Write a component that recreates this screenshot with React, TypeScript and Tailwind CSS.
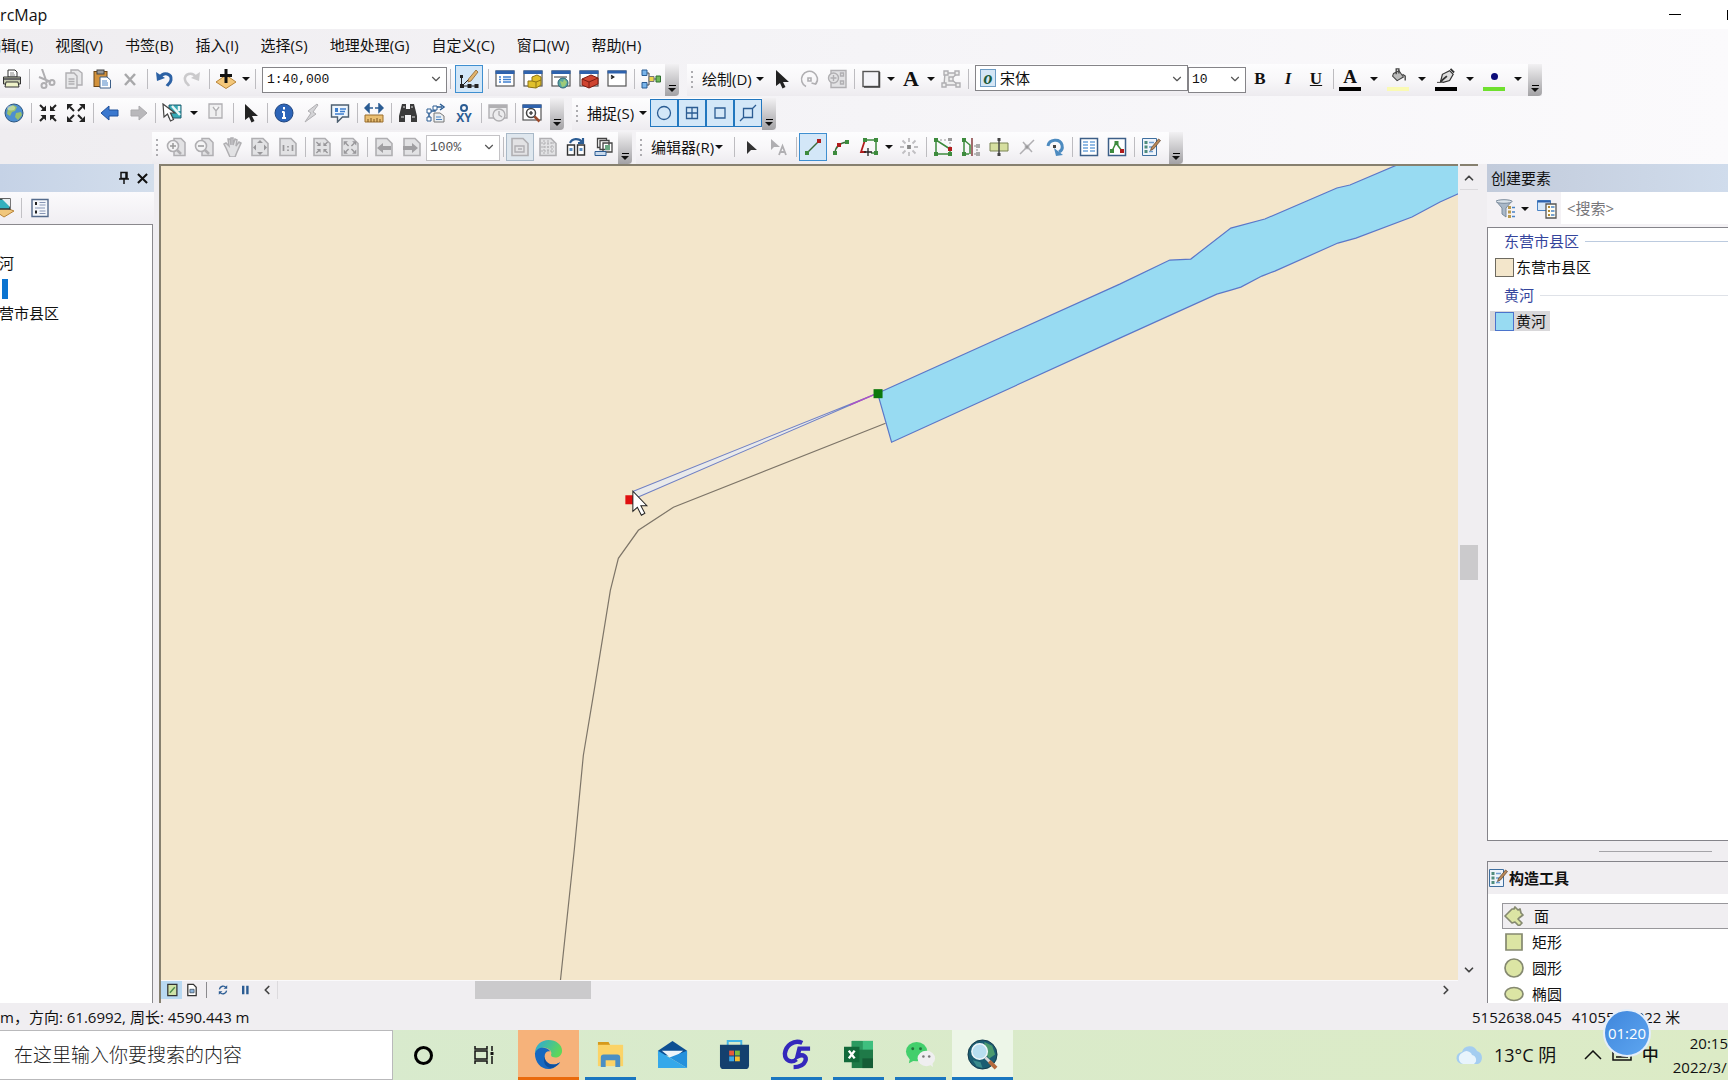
import { useState } from "react";
import type { ReactNode } from "react";
import { ChevronDown, ChevronLeft, ChevronRight, ChevronUp } from "lucide-react";
import clsx from "clsx";

// ---------------------------------------------------------------------------
// Icons (all on a 20x20 grid)
// ---------------------------------------------------------------------------

const G = "#b0afb2"; // disabled
const D = "#333";
const N = "#2b5c93"; // navy
const GR = "#3d8b3d";
const RD = "#b01c1c";

const page = <path d="M2 1.500h11l5 5v12H2z" fill="#e2e2e4" stroke={G} strokeWidth="1.600" />;

const win = (
  <>
    <rect x="1" y="2" width="18" height="15" fill="#fff" stroke="#555" strokeWidth="1.200" />
    <rect x="0.500" y="1.500" width="19" height="3.500" fill="#2e62ad" />
  </>
);

const pointer = <path d="M5 1v16l4-3 2.500 5.500 3-1.500-2.500-5H18z" fill="#222" />;

const sheetPen = (
  <>
    <path d="M1.500 1.500h14v17h-14z" fill="#eef4fb" stroke="#3f6f9f" />
    <path d="M3.500 4h3v3h-3zM3.500 8.500h3v3h-3zM3.500 13h3v3h-3z" fill="#4f8c7c" />
    <path d="M8 5.500h5M8 10h3M8 14.500h4" stroke="#6f9fd0" strokeWidth="1.500" />
    <path d="M17.500 2l2 1.500-7 8.500-3 1.500 1-3z" fill="#b98a5a" stroke="#5c4028" strokeWidth=".7" />
  </>
);

const arrowsIn = (c: string) => (
  <>
    <path d="M2 2l4 4M18 2l-4 4M2 18l4-4M18 18l-4-4" stroke={c} strokeWidth="2" />
    <path d="M8 2.500V8H2.500zM12 2.500V8h5.500zM8 17.500V12H2.500zM12 17.500V12h5.500z" fill={c} />
  </>
);

const arrowsOut = (c: string) => (
  <>
    <path d="M4 4l4 4M16 4l-4 4M4 16l4-4M16 16l-4-4" stroke={c} strokeWidth="2" />
    <path d="M1 1h6L1 7zM19 1h-6l6 6zM1 19h6l-6-6zM19 19h-6l6-6z" fill={c} />
  </>
);

const ICONS: Record<string, ReactNode> = {
  print: (
    <>
      <path d="M6 8V1h7l2 2v5z" fill="#fff" stroke={D} />
      <path d="M8 4h4M8 6h5" stroke="#888" />
      <path d="M1.500 8h17v7h-17z" fill="#c7ccb0" stroke={D} />
      <path d="M2 9h16v2H2z" fill="#666" />
      <path d="M4 13h12l1 5H3z" fill="#eef2c8" stroke={D} />
    </>
  ),
  cut: (
    <g stroke={G} strokeWidth="2" fill="none">
      <path d="M6 0l5 14M3 8l12 5" />
      <circle cx="8" cy="16.500" r="2.500" />
      <circle cx="16" cy="13.500" r="2.500" />
    </g>
  ),
  copy: (
    <g fill="#e8e8ea" stroke={G} strokeWidth="1.400">
      <path d="M7 1h7l4 3v12H7z" />
      <path d="M2 4h8l3 3v12H2z" />
      <path d="M4.500 10h6M4.500 12.500h6M4.500 15h6" />
    </g>
  ),
  paste: (
    <>
      <rect x="2" y="2.500" width="13" height="15" fill="#d3923c" stroke="#6b4516" />
      <rect x="5" y="1" width="7" height="4" fill="#999" stroke="#444" />
      <path d="M8 8h7l3.500 3v8H8z" fill="#fff" stroke="#3d5f88" />
      <path d="M10 12h5M10 14h6M10 16h6" stroke="#4a83c4" />
    </>
  ),
  remove: <path d="M5 5l10 11M15 5L5 16" stroke="#a8a8aa" strokeWidth="2.500" />,
  undo: (
    <>
      <path d="M6 8c4-6 12-3 11 3-.5 3-3 4-4 6" stroke="#2d62a5" strokeWidth="3" fill="none" />
      <path d="M2 3l1 9 8-3z" fill="#2d62a5" />
    </>
  ),
  redo: (
    <>
      <path d="M14 8C10 2 2 5 3 11c.5 3 3 4 4 6" stroke="#cbcacc" strokeWidth="2.500" fill="none" />
      <path d="M18 3l-1 9-8-3z" fill="#cbcacc" />
    </>
  ),
  addData: (
    <>
      <path d="M10 6l10 7-10 6.500L0 13z" fill="#f3c77a" stroke="#b9853a" />
      <path d="M10 0v14M4 6.500h12" stroke="#111" strokeWidth="3" />
    </>
  ),
  editorTool: (
    <>
      <path d="M2.500 7v10M2.500 17h15M4 16l6-6" stroke="#222" fill="none" />
      <path d="M1 6h3v3H1zM1 15h4v4H1zM8.500 15h4v4h-4zM15.500 15h4v4h-4z" fill="#222" />
      <path d="M17 1l2 2-7 9-3 1 .5-3z" fill="#e2b46d" stroke="#8a6230" strokeWidth=".8" />
    </>
  ),
  toc: (
    <>
      {win}
      <path d="M4 8h2M4 10.500h2M4 13h2M8 8h8M8 10.500h8M8 13h8" stroke="#3f7fce" strokeWidth="1.300" />
    </>
  ),
  catalog: (
    <>
      {win}
      <path d="M5 12h4V8l5-2 4 2v8l-5 3-8-1z" fill="#e0c02c" stroke="#8e7412" />
      <path d="M9 12l4 1 5-2M13 13v6" stroke="#8e7412" fill="none" />
    </>
  ),
  searchWin: (
    <>
      {win}
      <path d="M3 8h13" stroke="#999" strokeWidth="2" />
      <circle cx="12" cy="14" r="5" fill="#58a7a0" stroke="#2b6276" />
      <path d="M9 12l3 1 1-3 3 3-2 4-3 1z" fill="#9ecb7a" />
    </>
  ),
  toolbox: (
    <>
      {win}
      <path d="M3 10l9-4 7 3v6l-9 4-7-3z" fill="#cf4430" stroke="#7c1c12" />
      <path d="M3 10l7 3v6M10 13l9-4" stroke="#7c1c12" fill="none" />
    </>
  ),
  python: (
    <>
      <rect x="1" y="2" width="18" height="15" fill="#fff" stroke="#555" strokeWidth="1.200" />
      <rect x="0.500" y="1.500" width="19" height="3" fill="#2e62ad" />
      <path d="M4 6.500l2.500 1.500L4 9.500" stroke="#222" strokeWidth="1.500" fill="none" />
    </>
  ),
  model: (
    <>
      <path d="M6 4h2v12H5M8 10h8" stroke="#444" fill="none" />
      <path d="M1 1h5v5.500H1zM1 13.500h5V19H1z" fill="#79b4ea" stroke="#2b5c93" />
      <path d="M8 7.500h5v5H8z" fill="#ecd34a" stroke="#777" />
      <path d="M15 7h4.500v6H15z" fill="#71ba5a" stroke="#2f6f2f" />
    </>
  ),
  pointer,
  rotate: (
    <g stroke={G} strokeWidth="1.600" fill="none">
      <path d="M7 17.500A8 8 0 1 1 17 15M18.500 11l-2 4-4-1" />
      <path d="M9 9h3v3H9z" />
    </g>
  ),
  zoomSel: (
    <g stroke={G} strokeWidth="1.400" fill="#e2e2e4">
      <path d="M4 1.500h15v17H4z" />
      <circle cx="6.500" cy="9" r="5" />
      <path d="M6.500 6v6M3.500 9h6M13.500 4h3v3h-3zM13.500 12h3v3h-3z" />
    </g>
  ),
  rect: (
    <>
      <rect x="2" y="2.500" width="16" height="15" fill="#f4f4f8" stroke="#555" strokeWidth="1.400" />
      <path d="M18.500 3v15H3" stroke="#444" strokeWidth="1.500" fill="none" />
    </>
  ),
  vertices: (
    <g stroke={G} strokeWidth="1.400" fill="#eee">
      <path d="M4 4h13l-7 6 7 6H3z" />
      <path d="M3 2h4v4H3zM14 2h4v4h-4zM8 8h4v4H8zM1 14h4v4H1zM15 14h4v4h-4z" />
    </g>
  ),
  bucket: (
    <>
      <path d="M5 6l6-3 5 7-7 4-5-5z" fill="#bbb" stroke="#444" strokeWidth="1.200" />
      <path d="M8 7V1h3v5M15 7l3 2v5" stroke="#444" strokeWidth="1.500" fill="none" />
    </>
  ),
  pen: (
    <>
      <path d="M4 15l2-8 8-4 4 4-4 7-7 2z" fill="#ddd" stroke="#333" strokeWidth="1.300" />
      <path d="M15 1l4 4M4 15l7-6" stroke="#333" strokeWidth="2" />
      <path d="M0 16h5" stroke="#333" />
    </>
  ),
  globe: (
    <>
      <circle cx="10" cy="10" r="9" fill="#4d8fd0" stroke="#2b567f" />
      <path d="M4 5l5-3 4 2-2 4-3 1-2 4-3-2zM12 10l5-1 1 3-4 5-3-3z" fill="#9ac16b" />
      <ellipse cx="7" cy="5" rx="4" ry="2.500" fill="#fff" opacity=".35" />
    </>
  ),
  fixedIn: arrowsIn("#222"),
  fixedOut: arrowsOut("#222"),
  back: <path d="M1 10l8-7v4h9v6H9v4z" fill="#3a78cf" stroke="#1f509b" />,
  forward: <path d="M19 10l-8-7v4H3v6h8v4z" fill="#b9b8bb" stroke="#acabae" />,
  selectFeat: (
    <>
      <path d="M7 2h12v13H7z" fill="#35a9b5" stroke="#225f70" />
      <path d="M10 3l8 9M17 3v5" stroke="#e9f5f5" strokeWidth="2.500" />
      <path d="M1 1l1 13 3.500-3 3 7 3-1.500-3-6.500H13z" fill="#fff" stroke="#444" strokeWidth="1.200" />
    </>
  ),
  clearSel: (
    <g stroke={G} strokeWidth="1.300" fill="#efeff0">
      <path d="M3 1h13v14H3zM7 4l3 4 3-4M10 8v5" />
    </g>
  ),
  info: (
    <>
      <circle cx="10" cy="10" r="9" fill="#2c64b8" stroke="#1f4580" />
      <path d="M10 4v2.500M10 8.500V15M8 9h2M8 15h4" stroke="#fff" strokeWidth="2" />
    </>
  ),
  lightning: <path d="M15 1L6 8l3 2-6 9 11-8-3-2 5-7z" fill="#d4d4d7" stroke={G} />,
  popup: (
    <>
      <path d="M1.500 2h17v12h-6l-5 5v-5h-6z" fill="#eef5fc" stroke="#4d5f70" strokeWidth="1.400" />
      <path d="M5 5h3v4H5z" fill="#3f7fce" />
      <path d="M10 6h6M10 8.500h5M5 11h9" stroke="#3f7fce" strokeWidth="1.300" />
    </>
  ),
  measure: (
    <>
      <path d="M1 5l4-4v8zM19 5l-4-4v8zM4 5h5M11 5h5" fill={N} stroke={N} strokeWidth="1.500" />
      <path d="M1 12h18v7H1z" fill="#eabf72" stroke="#9b6f2c" />
      <path d="M4 19v-3M7 19v-4M10 19v-3M13 19v-4M16 19v-3" stroke="#7a5420" />
    </>
  ),
  find: (
    <>
      <path d="M4 1h4v5h4V1h4l3 12v6h-6v-7H7v7H1v-6z" fill="#3a3a3a" />
      <path d="M3 14h3M14 14h3M5 4h2M13 4h2" stroke="#aaa" strokeWidth="1.300" />
    </>
  ),
  route: (
    <>
      <path d="M3 15V8h6V4h7M14 1l4 3-4 3" stroke={N} strokeWidth="1.500" fill="none" />
      <path d="M1 14h4v4H1zM1 6h4v4H1zM7 3h4v4H7z" fill="#fff" stroke={N} />
      <path d="M8 10h6l4 3v6H8z" fill="#e9eef2" stroke="#777" />
      <path d="M10 14h5M10 16.500h6" stroke="#4a83c4" />
    </>
  ),
  time: (
    <g stroke={G} strokeWidth="1.400" fill="#ececee">
      <path d="M1 2h18v13H1z" />
      <path d="M1 3.500h18" strokeWidth="3" />
      <circle cx="11" cy="12" r="6" />
      <path d="M11 8v4l3 2" fill="none" />
    </g>
  ),
  viewer: (
    <>
      {win}
      <circle cx="9" cy="10" r="4.500" fill="#fff" stroke="#444" strokeWidth="1.500" />
      <path d="M9 8v4M7 10h4" stroke="#222" strokeWidth="1.200" />
      <path d="M12.500 13.500l5 5" stroke="#9a4a2c" strokeWidth="2.500" />
    </>
  ),
  snapPoint: <circle cx="10" cy="10" r="6.500" fill="none" stroke={N} strokeWidth="1.300" />,
  snapEnd: <path d="M4.500 4.500h11v11h-11zM10 4.500v11M4.500 10h11" fill="none" stroke={N} strokeWidth="1.300" />,
  snapVertex: <path d="M5 5h10v10H5z" fill="none" stroke={N} strokeWidth="1.300" />,
  snapEdge: <path d="M5.500 5.500h9v9h-9zM2 18l3.500-3.500M14.500 5.500L18 2" fill="none" stroke={N} strokeWidth="1.300" />,
  lZoomIn: (
    <>
      <path d="M8 1.500h7l4 4v13H8z" fill="#e2e2e4" stroke={G} strokeWidth="1.500" />
      <circle cx="7" cy="9" r="5.500" fill="#f4f4f5" stroke={G} strokeWidth="1.600" />
      <path d="M7 6v6M4 9h6" stroke="#999" strokeWidth="1.500" />
      <path d="M11 13l4 4" stroke={G} strokeWidth="2.500" />
    </>
  ),
  lZoomOut: (
    <>
      <path d="M8 1.500h7l4 4v13H8z" fill="#e2e2e4" stroke={G} strokeWidth="1.500" />
      <circle cx="7" cy="9" r="5.500" fill="#f4f4f5" stroke={G} strokeWidth="1.600" />
      <path d="M4 9h6" stroke="#999" strokeWidth="1.500" />
      <path d="M11 13l4 4" stroke={G} strokeWidth="2.500" />
    </>
  ),
  lPan: (
    <path
      d="M4 11L2 7l2-1 3 3-1-7h2l1 6V1h2v7l2-6 2 1-1 6 3-4 2 1-4 9-2 5H8z"
      fill="#e2e2e4"
      stroke={G}
      strokeWidth="1.500"
    />
  ),
  lWhole: (
    <>
      {page}
      <path d="M10 3l3 3H7zM10 18l3-3H7zM3 10.500l3-3v6zM17 10.500l-3-3v6z" fill="#98979a" />
    </>
  ),
  lActual: (
    <>
      {page}
      <path d="M5.500 8v6M14.500 8v6M10 9v1.500M10 12.500V14" stroke="#98979a" strokeWidth="1.700" />
    </>
  ),
  lIn: (
    <>
      {page}
      <g transform="translate(3 3.500) scale(.7)">{arrowsIn("#98979a")}</g>
    </>
  ),
  lOut: (
    <>
      {page}
      <g transform="translate(3 3.500) scale(.7)">{arrowsOut("#98979a")}</g>
    </>
  ),
  lBack: (
    <>
      {page}
      <path d="M3 11l6-5v3h8v4H9v3z" fill="#a09fa2" />
    </>
  ),
  lForward: (
    <>
      {page}
      <path d="M16 11l-6-5v3H1v4h9v3z" fill="#a09fa2" />
    </>
  ),
  draft: (
    <>
      {page}
      <path d="M5 9h9v6H5zM8 12h4" fill="none" stroke={G} strokeWidth="1.400" />
    </>
  ),
  focusFrame: (
    <>
      {page}
      <path d="M3 6h13M3 10h13M3 14h13M6 3v14M10 3v14M14 5v12" stroke={G} strokeDasharray="2 1" />
    </>
  ),
  changeLayout: (
    <>
      <path d="M1.500 8h7v10h-7zM11.500 8h7v10h-7z" fill="#fff" stroke="#333" strokeWidth="1.400" />
      <path d="M3.500 11h3v3h-3zM13.500 11h3v3h-3z" fill="#5b8fc4" />
      <path d="M4 6c2-5 9-5 12-1M17 1v5h-5" stroke={N} strokeWidth="2.200" fill="none" />
    </>
  ),
  pages: (
    <>
      <path d="M3.500 1.500h9v9h-9z" fill="#fff" stroke="#444" strokeWidth="1.300" />
      <path d="M6 3.500h9v9H6zM9 6h9v9H9z" fill="#fff" stroke="#444" strokeWidth="1.300" />
      <path d="M11 8h5v5h-5z" fill="#6aa882" />
      <path d="M1 14.500h11v4H1z" fill="#c8d9ec" stroke={N} />
    </>
  ),
  editTool: <path d="M6 4v13l4-4h6z" fill="#333" />,
  editAnno: (
    <>
      <path d="M2 2v11l3-3h6z" fill={G} />
      <path d="M10 18l3.500-9 3.500 9M11 15h5" stroke={G} strokeWidth="1.800" fill="none" />
    </>
  ),
  segLine: (
    <>
      <path d="M4 16L16 4" stroke="#3a6b3a" strokeWidth="1.500" />
      <path d="M2 14h4v4H2z" fill={GR} />
      <path d="M14 2h4v4h-4z" fill={RD} />
    </>
  ),
  segArc: (
    <>
      <path d="M4 17c0-7 4-11 12-12" stroke="#3a6b3a" strokeWidth="1.500" fill="none" />
      <path d="M2 14h4v4H2zM14 3h4v4h-4z" fill={GR} />
      <path d="M6 6h4v4H6z" fill={RD} />
    </>
  ),
  trace: (
    <>
      <path d="M6 3h11v13h-5" stroke={GR} strokeWidth="1.500" fill="none" />
      <path d="M6 3L2 15h5" stroke={RD} strokeWidth="1.800" fill="none" />
      <path d="M4 1h4v4H4zM15 1h4v4h-4zM15 14h4v4h-4z" fill={GR} />
      <path d="M9 11v8M5 15h8" stroke="#222" strokeWidth="1.300" />
    </>
  ),
  pointTool: (
    <g stroke="#c0bfc2" strokeWidth="1.800" fill="none">
      <path d="M10 1v4M10 15v4M1 10h4M15 10h4M3.500 3.500l3 3M16.500 3.500l-3 3M3.500 16.500l3-3M16.500 16.500l-3-3" />
      <path d="M9 9h2v2H9z" stroke="#888" />
    </g>
  ),
  editVerts: (
    <>
      <path d="M3 3v14h14V12L3 3" stroke={GR} strokeWidth="1.500" fill="none" />
      <path d="M3 3h14v10" stroke="#999" strokeDasharray="2 2" fill="none" />
      <path d="M1 1h4v4H1zM1 15h4v4H1zM15 15h4v4h-4z" fill={GR} />
      <path d="M15 10h4v4h-4z" fill={RD} />
      <path d="M15 1h4v3h-4z" fill="#999" />
    </>
  ),
  reshape: (
    <>
      <path d="M3 3v14h5M3 3l6 5v9" stroke={GR} strokeWidth="1.500" fill="none" />
      <path d="M11 1v18" stroke="#7b3030" strokeWidth="1.400" />
      <path d="M13 9h3v8h-3" stroke="#888" strokeDasharray="2 1" fill="none" />
      <path d="M15 7h4v4h-4zM15 15h4v4h-4z" fill="#aaa" />
      <path d="M1 1h4v4H1zM1 15h4v4H1z" fill={GR} />
    </>
  ),
  cutPoly: (
    <>
      <path d="M1 6h18v8H1z" fill="#d6dfa0" stroke="#7b8454" />
      <path d="M10 1v18" stroke="#444" strokeWidth="1.500" />
      <path d="M8.500 1h3v3h-3zM8.500 16h3v3h-3z" fill="#444" />
    </>
  ),
  split: (
    <g stroke={G} strokeWidth="1.500">
      <path d="M3 17L17 3M6 5l9 10" />
      <path d="M8.500 8.500h3v3h-3z" fill="#888" />
    </g>
  ),
  rotateFeat: (
    <>
      <path d="M3 9c1-7 12-8 14-1 1 4-1 6-3 7" stroke="#4d8bc0" strokeWidth="3" fill="none" />
      <path d="M9 11l2 8 7-1z" fill="#4d8bc0" />
      <path d="M8 8h3v3H8z" fill="#444" />
    </>
  ),
  attrs: (
    <>
      <path d="M1.500 1.500h17v17h-17z" fill="#fff" stroke="#3d5f88" strokeWidth="1.500" />
      <path d="M4 5h5M4 8h5M4 11h5M4 14h5M11 5h5M11 8h5M11 11h5M11 14h5" stroke="#6fa5dc" strokeWidth="1.500" />
    </>
  ),
  sketchProps: (
    <>
      <path d="M1.500 1.500h17v17h-17z" fill="#fff" stroke="#3d5f88" strokeWidth="1.500" />
      <path d="M5 14l4-8 6 8" stroke={GR} strokeWidth="1.500" fill="none" />
      <path d="M3 12h4v4H3zM7.500 4h4v4h-4z" fill={GR} />
      <path d="M13 12h4v4h-4z" fill={RD} />
    </>
  ),
  sheetPen,
  layerBy: (
    <>
      <path d="M9 9l10 4-10 6-9-6z" fill="#f1c77c" stroke="#b9853a" />
      <path d="M1 1h14v10H1z" fill="#33b0bd" stroke="#333" strokeWidth="1.300" />
      <path d="M7 1h8v8z" fill="#e7eef0" />
    </>
  ),
  options: (
    <>
      <path d="M2 1.500h16v17H2z" fill="#f4f7fb" stroke="#556b8c" strokeWidth="1.400" />
      <path d="M5 5.500h2M5 14h2" stroke="#222" strokeWidth="3" />
      <path d="M9.500 4.500h6M9.500 7h6M9.500 13h6M9.500 15.500h6M5 10h10" stroke="#8796b5" />
    </>
  ),
  filter: (
    <>
      <path d="M0 2h16l-6 7v9l-4-3V9z" fill="#a9b8c8" stroke="#7b8b9c" />
      <ellipse cx="8" cy="2.500" rx="8" ry="1.800" fill="#dbe3ea" stroke="#7b8b9c" />
      <path d="M12 7h3v3h-3zM12 11.500h3v3h-3zM12 16h3v3h-3z" fill="#b99a4d" />
      <path d="M16 8.500h3M16 13h3M16 17.500h3" stroke="#4a83c4" strokeWidth="1.400" />
    </>
  ),
  templates: (
    <>
      <path d="M.5 1.500h13v10H.5z" fill="#d8e8f8" stroke="#4a83c4" />
      <path d="M.5 1.500h13v2H.5z" fill="#2e62ad" />
      <path d="M9 5h10v14H9z" fill="#fffdf2" stroke="#555" strokeWidth="1.300" />
      <path d="M11 8h2M11 12h2M11 16h2" stroke="#b48a32" strokeWidth="2" />
      <path d="M14 8h3.500M14 12h3.500M14 16h3.500" stroke="#4a83c4" strokeWidth="1.300" />
    </>
  ),
  polygon: (
    <path
      d="M1 10l7-7h2l1-2 3 3 2-1 1 4 2 2-4 3-1 1 4 4-3 3-4-4-3 1z"
      fill="#dce5a4"
      stroke="#858970"
      strokeWidth="1.700"
      strokeLinejoin="round"
    />
  ),
  rectangle: <path d="M2 2h16v16H2z" fill="#dce5a4" stroke="#858970" strokeWidth="1.700" />,
  circle: <circle cx="10" cy="10" r="9" fill="#dce5a4" stroke="#858970" strokeWidth="1.700" />,
  ellipse: <ellipse cx="10" cy="10" rx="9" ry="6.500" fill="#dce5a4" stroke="#858970" strokeWidth="1.700" />,
  dataView: (
    <>
      <path d="M4 2h13v16H4z" fill="#cfe3a8" stroke="#333" strokeWidth="1.800" />
      <path d="M7 14l7-8" stroke="#4b8b4b" strokeWidth="2" />
    </>
  ),
  layoutView: (
    <>
      <path d="M4 2h8l4 4v12H4z" fill="#fff" stroke="#333" strokeWidth="1.800" />
      <path d="M7 9h6v5H7z" fill="#8db4dc" stroke="#345" />
    </>
  ),
  refresh: (
    <>
      <path d="M4 9c1-6 8-7 11-3M16 11c-1 6-8 7-11 3" stroke={N} strokeWidth="2.200" fill="none" />
      <path d="M17 2v6h-6zM3 18v-6h6z" fill={N} />
    </>
  ),
  pause: <path d="M5 3h4v14H5zM12 3h4v14h-4z" fill={N} />,
};

function Icon({ name, className = "h-5 w-5" }: { name: string; className?: string }) {
  return (
    <svg viewBox="0 0 20 20" className={clsx("shrink-0", className)} fill="none" aria-hidden="true">
      {ICONS[name]}
    </svg>
  );
}

// ---------------------------------------------------------------------------
// Toolbar parts
// ---------------------------------------------------------------------------

function Caret() {
  return (
    <svg viewBox="0 0 8 4" className="h-1 w-2 shrink-0" aria-hidden="true">
      <path d="M0 0h8L4 4z" fill="#111" />
    </svg>
  );
}

function Tool({ icon, active, snap }: { icon: string; active?: boolean; snap?: boolean }) {
  return (
    <button
      aria-label={icon}
      className={clsx(
        "flex h-7 w-7 shrink-0 items-center justify-center",
        active && "border border-[#3f8fd0] bg-[#d3e7f8]",
        snap && "border border-[#2277bf] bg-[#d3e7f8]"
      )}
    >
      <Icon name={icon} />
    </button>
  );
}

function Tools({ names }: { names: string[] }) {
  return (
    <>
      {names.map((n) => (
        <Tool key={n} icon={n} />
      ))}
    </>
  );
}

function Drop({ className = "w-3" }: { className?: string }) {
  return (
    <button aria-label="more" className={clsx("flex h-7 shrink-0 items-center justify-center", className)}>
      <Caret />
    </button>
  );
}

function Sep() {
  return (
    <span className="flex h-7 w-[6px] shrink-0 items-center justify-center">
      <span className="h-[20px] w-px bg-[#bdbcc0]" />
    </span>
  );
}

function Grip() {
  return (
    <span className="flex h-7 w-[10px] shrink-0 flex-col items-center justify-center gap-[3px]">
      {[0, 1, 2, 3].map((i) => (
        <span key={i} className="h-[2px] w-[2px] bg-[#adacb0]" />
      ))}
    </span>
  );
}

function Overflow() {
  return (
    <button
      aria-label="toolbar options"
      className="-mt-px flex h-8 w-[14px] shrink-0 flex-col items-center justify-end gap-[2px] rounded-br-sm bg-linear-to-b from-[#f2f1f3] to-[#a3a2a5] pb-1"
    >
      <span className="h-px w-[7px] bg-black" />
      <Caret />
    </button>
  );
}

function Bar({ children, className }: { children: ReactNode; className?: string }) {
  return (
    <div
      className={clsx(
        "flex h-8 shrink-0 items-start bg-linear-to-b from-[#fdfdfe] via-[#f8f7f9] to-[#edebef] pt-px",
        className
      )}
    >
      {children}
    </div>
  );
}

function Combo({
  value,
  label,
  className,
  textClass,
  icon,
}: {
  value: string;
  label: string;
  className: string;
  textClass: string;
  icon?: ReactNode;
}) {
  return (
    <div className={clsx("relative h-[26px] shrink-0", className)}>
      <select
        aria-label={label}
        defaultValue={value}
        className={clsx("h-full w-full appearance-none border bg-white outline-none", textClass)}
      >
        <option>{value}</option>
      </select>
      {icon}
      <ChevronDown className="pointer-events-none absolute top-[7px] right-1 h-3.5 w-3.5 text-[#555]" strokeWidth={2} />
    </div>
  );
}

function MenuLabel({ text, className }: { text: string; className: string }) {
  return (
    <button className={clsx("flex h-7 shrink-0 items-center justify-between pl-[5px] text-[15px]", className)}>
      <span className="whitespace-nowrap">{text}</span>
      <Caret />
    </button>
  );
}

function ColorTool({ icon, glyph, bar }: { icon?: string; glyph?: ReactNode; bar: string }) {
  return (
    <>
      <button aria-label="color" className="flex h-7 w-7 shrink-0 flex-col items-center justify-center gap-px">
        <span className="flex h-[18px] items-center justify-center">
          {icon ? <Icon name={icon} className="h-[18px] w-[18px]" /> : glyph}
        </span>
        <span className={clsx("h-1 w-[22px]", bar)} />
      </button>
      <Drop className="w-5" />
    </>
  );
}

const MENUS = ["编辑(E)", "视图(V)", "书签(B)", "插入(I)", "选择(S)", "地理处理(G)", "自定义(C)", "窗口(W)", "帮助(H)"];

function Toolbars() {
  return (
    <div className="flex flex-col gap-[2px] overflow-hidden">
      <div className="flex">
        <Bar className="-ml-[2px]">
          <Tools names={["print"]} />
          <Sep />
          <Tools names={["cut", "copy", "paste", "remove"]} />
          <Sep />
          <Tools names={["undo", "redo"]} />
          <Sep />
          <Tools names={["addData"]} />
          <Drop />
          <Sep />
          <Combo
            label="比例"
            value="1:40,000"
            className="ml-1 w-[185px]"
            textClass="border-[#858488] pl-1 font-['Liberation_Mono',monospace] text-[13px]"
          />
          <Sep />
          <span className="px-[2px]">
            <Tool icon="editorTool" active />
          </span>
          <Sep />
          <Tools names={["toc", "catalog", "searchWin", "toolbox", "python"]} />
          <Sep />
          <Tools names={["model"]} />
          <Overflow />
        </Bar>
        <Bar className="ml-2">
          <Grip />
          <MenuLabel text="绘制(D)" className="w-[70px] pr-[3px]" />
          <Tools names={["pointer", "rotate", "zoomSel"]} />
          <Sep />
          <Tools names={["rect"]} />
          <Drop />
          <button className="h-7 w-7 text-center font-['Liberation_Serif',serif] text-[22px] leading-7 font-bold">A</button>
          <Drop />
          <Tools names={["vertices"]} />
          <Sep />
          <Combo
            label="字体"
            value="宋体"
            className="ml-1 w-[213px]"
            textClass="border-[#858488] pl-6 text-[15px]"
            icon={
              <span className="pointer-events-none absolute top-1 left-[5px] flex h-[18px] w-4 items-center justify-center border border-[#6d9cc4] bg-[#d4e6f5] font-['Liberation_Serif',serif] text-[18px] leading-4 font-bold text-[#1c5c3c] italic">
                o
              </span>
            }
          />
          <Combo
            label="字号"
            value="10"
            className="w-[58px]"
            textClass="border-[#858488] pl-[3px] font-['Liberation_Mono',monospace] text-[13px]"
          />
          <button className="h-7 w-7 font-['Liberation_Serif',serif] text-[17px] font-bold">B</button>
          <button className="h-7 w-7 font-['Liberation_Serif',serif] text-[17px] font-bold italic">I</button>
          <button className="h-7 w-7 font-['Liberation_Serif',serif] text-[17px] font-bold underline">U</button>
          <Sep />
          <ColorTool
            glyph={<span className="font-['Liberation_Serif',serif] text-[19px] leading-[18px] font-bold">A</span>}
            bar="bg-black"
          />
          <ColorTool icon="bucket" bar="bg-[#fafab4]" />
          <ColorTool icon="pen" bar="bg-black" />
          <ColorTool glyph={<span className="h-[7px] w-[7px] rounded-full bg-[#0c0c78]" />} bar="bg-[#6fe02e]" />
          <Overflow />
        </Bar>
      </div>

      <div className="flex">
        <Bar>
          <Tools names={["globe"]} />
          <Sep />
          <Tools names={["fixedIn", "fixedOut"]} />
          <Sep />
          <Tools names={["back", "forward"]} />
          <Sep />
          <Tools names={["selectFeat"]} />
          <Drop className="w-4" />
          <Tools names={["clearSel"]} />
          <Sep />
          <Tools names={["pointer"]} />
          <Sep />
          <Tools names={["info", "lightning", "popup"]} />
          <Sep />
          <Tools names={["measure"]} />
          <Sep />
          <Tools names={["find", "route"]} />
          <button className="flex h-7 w-7 shrink-0 flex-col items-center justify-center text-[12px] leading-[11px] font-bold text-[#2b5c93]">
            <span className="flex h-2 w-2 items-center justify-center rounded-full border-2 border-[#2b5c93]" />
            XY
          </button>
          <Sep />
          <Tools names={["time"]} />
          <Sep />
          <Tools names={["viewer"]} />
          <span className="w-1" />
          <Overflow />
        </Bar>
        <Bar className="ml-2">
          <Grip />
          <MenuLabel text="捕捉(S)" className="w-[68px] pr-[3px]" />
          <Tool icon="snapPoint" snap />
          <Tool icon="snapEnd" snap />
          <Tool icon="snapVertex" snap />
          <Tool icon="snapEdge" snap />
          <Overflow />
        </Bar>
      </div>

      <div className="flex pl-[152px]">
        <Bar>
          <Grip />
          <Tools names={["lZoomIn", "lZoomOut", "lPan", "lWhole", "lActual"]} />
          <Sep />
          <Tools names={["lIn", "lOut"]} />
          <Sep />
          <Tools names={["lBack", "lForward"]} />
          <Combo
            label="缩放"
            value="100%"
            className="w-[74px]"
            textClass="border-[#c4c3c6] pl-[3px] font-['Liberation_Mono',monospace] text-[13px] text-[#555]"
          />
          <Sep />
          <button
            aria-label="draft"
            className="flex h-7 w-7 shrink-0 items-center justify-center border border-[#a9b9c8] bg-[#dfe7ee]"
          >
            <Icon name="draft" />
          </button>
          <Tools names={["focusFrame", "changeLayout", "pages"]} />
          <Overflow />
        </Bar>
        <Bar className="ml-1">
          <Grip />
          <MenuLabel text="编辑器(R)" className="w-[85px] pr-2" />
          <Sep />
          <Tools names={["editTool", "editAnno"]} />
          <Sep />
          <Tool icon="segLine" active />
          <Tools names={["segArc", "trace"]} />
          <Drop />
          <Tools names={["pointTool"]} />
          <Sep />
          <Tools names={["editVerts", "reshape", "cutPoly", "split", "rotateFeat"]} />
          <Sep />
          <Tools names={["attrs", "sketchProps"]} />
          <Sep />
          <Tools names={["sheetPen"]} />
          <span className="w-1" />
          <Overflow />
        </Bar>
      </div>
    </div>
  );
}

// ---------------------------------------------------------------------------
// Panels
// ---------------------------------------------------------------------------

function ContentsPanel() {
  return (
    <aside className="mr-[5px] flex w-[154px] shrink-0 flex-col overflow-hidden">
      <div className="flex h-7 shrink-0 items-center justify-end gap-1 bg-linear-to-r from-[#c5d2e6] to-[#d3deec] pr-[3px]">
        <button aria-label="pin">
          <svg viewBox="0 0 12 14" className="h-3.5 w-3" aria-hidden="true">
            <path d="M3 1.500h6v6H3zM8 1.500v6M1 8h10M6 8v5" stroke="#111" strokeWidth="1.500" fill="none" />
          </svg>
        </button>
        <button aria-label="close">
          <svg viewBox="0 0 12 12" className="mx-[3px] h-[11px] w-[11px]" aria-hidden="true">
            <path d="M1 1l10 10M11 1L1 11" stroke="#111" strokeWidth="2.200" />
          </svg>
        </button>
      </div>
      <div className="flex h-8 shrink-0 items-center bg-linear-to-b from-[#fbfafc] to-[#f0eef2]">
        <button aria-label="layers" className="-ml-[5px]">
          <Icon name="layerBy" />
        </button>
        <span className="ml-[6px] h-5 w-px bg-[#c2c1c5]" />
        <button aria-label="options" className="ml-2">
          <Icon name="options" />
        </button>
      </div>
      <div className="mr-px flex-1 border-t border-r border-[#8a898d] bg-white pt-[26px] text-[15px] leading-[25px]">
        <div className="-ml-[1px] h-[25px]">河</div>
        <div className="flex h-[25px] items-center pl-[2px]">
          <span className="h-5 w-[6px] bg-[#0b74d1]" />
        </div>
        <div className="-ml-[1px] h-[25px]">营市县区</div>
      </div>
    </aside>
  );
}

function MapCanvas() {
  return (
    <svg
      viewBox="162 166 1296 814"
      preserveAspectRatio="xMinYMin slice"
      className="min-h-0 w-full flex-1 bg-[#f3e6cb]"
      role="img"
      aria-label="map"
    >
      <polyline
        points="886,423 674,507 639,530 619,558 611,590 595,689 584,755 575,849 561,981"
        fill="none"
        stroke="#7d7568"
        strokeWidth="1.200"
      />
      <polygon
        points="878,393 1120,284 1170,260 1191,259 1231,228 1265,219 1337,188 1350,185 1397,165 1460,165 1460,193 1440,202 1412,217 1356,238 1338,243 1275,271 1262,276 1241,287 1231,290 1217,294 1120,338 892,442"
        fill="#98dbf2"
        stroke="#5b77c8"
        strokeWidth="1.200"
      />
      <polygon points="634,491 878,393 636,498" fill="#e9eaea" stroke="#7080c4" />
      <path d="M850 405L878 393" stroke="#b04fc4" strokeWidth="1.500" />
      <rect x="874" y="389" width="9" height="9" fill="#0c780c" />
      <rect x="626" y="495" width="9" height="9" fill="#e01010" />
      <path d="M633.500 491v20l4.500-4 4 8 3.500-2-4-7.500h6z" fill="#fff" stroke="#222" />
    </svg>
  );
}

function MapArea() {
  return (
    <main className="flex min-w-0 flex-1">
      <div className="flex min-w-0 flex-1 flex-col border-t-2 border-l-2 border-[#86806f]">
        <MapCanvas />
        <div className="flex h-[23px] shrink-0 items-center border-t border-[#faf9fb] bg-[#f0eef1] pb-1">
          <button aria-label="data view" className="flex h-[18px] w-[21px] items-center justify-center bg-[#b9d9f2]">
            <Icon name="dataView" className="h-3.5 w-3.5" />
          </button>
          <button aria-label="layout view" className="flex w-5 items-center justify-center">
            <Icon name="layoutView" className="h-3.5 w-3.5" />
          </button>
          <span className="ml-1 h-4 w-px bg-[#8b8a8e]" />
          <button aria-label="refresh" className="ml-[10px]">
            <Icon name="refresh" className="h-3 w-3" />
          </button>
          <button aria-label="pause" className="ml-[10px]">
            <Icon name="pause" className="h-3 w-3" />
          </button>
          <button aria-label="scroll left" className="ml-[6px] flex w-5 justify-center">
            <ChevronLeft className="h-3.5 w-3.5 text-[#444]" strokeWidth={3} />
          </button>
          <div className="flex h-[18px] flex-1 border-l border-[#dcdadd]">
            <span className="ml-[17%] w-[116px] bg-[#cbcacc]" />
          </div>
          <button aria-label="scroll right" className="flex w-6 justify-center">
            <ChevronRight className="h-3.5 w-3.5 text-[#444]" strokeWidth={3} />
          </button>
        </div>
      </div>
      <div className="mr-[9px] ml-[2px] flex w-[18px] shrink-0 flex-col items-center border-t-2 border-[#86806f] bg-[#f0eef1]">
        <button aria-label="scroll up" className="flex h-6 w-full items-center justify-center border-b border-[#dcdadd]">
          <ChevronUp className="h-3.5 w-3.5 text-[#444]" strokeWidth={3} />
        </button>
        <div className="flex w-full flex-1 flex-col">
          <span className="mt-[355px] h-[35px] w-full bg-[#cbcacc]" />
        </div>
        <button aria-label="scroll down" className="mb-[21px] flex h-6 items-center justify-center">
          <ChevronDown className="h-3.5 w-3.5 text-[#444]" strokeWidth={3} />
        </button>
      </div>
    </main>
  );
}

const TEMPLATES = [
  { group: "东营市县区", swatch: "border-[#6e6a60] bg-[#f3e6cb]", line: "bg-[#bccbdf]" },
  { group: "黄河", swatch: "border-[#4b74cc] bg-[#98dbf2]", line: "bg-[#dfe2e8]" },
];

const CONSTRUCTION = [
  { icon: "polygon", label: "面" },
  { icon: "rectangle", label: "矩形" },
  { icon: "circle", label: "圆形" },
  { icon: "ellipse", label: "椭圆" },
];

function CreateFeatures() {
  const [template, setTemplate] = useState("黄河");
  const [tool, setTool] = useState("面");

  return (
    <aside className="flex w-[241px] shrink-0 flex-col overflow-hidden text-[15px]">
      <h2 className="flex h-7 shrink-0 items-center bg-linear-to-r from-[#c2cbdb] to-[#d0dcec] pl-1">创建要素</h2>
      <div className="flex h-[35px] shrink-0 items-start bg-[#f4f2f5] pl-[9px]">
        <button aria-label="filter" className="flex h-[33px] items-center gap-[5px]">
          <Icon name="filter" />
          <Caret />
        </button>
        <button aria-label="templates" className="mr-1 ml-2 h-[33px]">
          <Icon name="templates" />
        </button>
        <input
          aria-label="搜索"
          placeholder="<搜索>"
          className="h-[32px] min-w-0 flex-1 bg-white pl-[6px] outline-none placeholder:text-[#77767a]"
        />
      </div>
      <div className="h-[614px] shrink-0 border-t border-b border-l border-[#85848a] bg-white">
        {TEMPLATES.map((t) => (
          <section key={t.group} className="h-[54px]">
            <div className="flex h-[27px] items-center gap-[6px] pl-4 text-[#35459c]">
              {t.group}
              <span className={clsx("h-px flex-1", t.line)} />
            </div>
            <button
              onClick={() => setTemplate(t.group)}
              className={clsx(
                "mt-[2px] ml-[2px] flex h-5 items-center gap-[2px] pr-1 pl-[5px] whitespace-nowrap",
                template === t.group && "bg-[#d9d8da]"
              )}
            >
              <span className={clsx("h-[19px] w-[19px] border", t.swatch)} />
              {t.group}
            </button>
          </section>
        ))}
      </div>
      <div className="flex h-5 shrink-0 items-center pl-[112px]">
        <span className="mr-4 h-px flex-1 bg-[#a5a4a8]" />
      </div>
      <div className="flex min-h-0 flex-1 flex-col overflow-hidden border-t border-l border-[#85848a]">
        <h3 className="flex h-8 shrink-0 items-center gap-px font-bold">
          <Icon name="sheetPen" />
          构造工具
        </h3>
        <div className="flex-1 bg-white pt-[9px] pl-[14px]">
          {CONSTRUCTION.map((c) => (
            <button
              key={c.label}
              onClick={() => setTool(c.label)}
              className={clsx(
                "flex h-[26px] w-full items-center border border-r-0 pl-px",
                tool === c.label ? "gap-[10px] border-[#98979b] bg-[#f0eef1]" : "gap-2 border-transparent"
              )}
            >
              <Icon name={c.icon} />
              {c.label}
            </button>
          ))}
        </div>
      </div>
    </aside>
  );
}

// ---------------------------------------------------------------------------
// Taskbar
// ---------------------------------------------------------------------------

const APPS: { name: string; cell?: string; bar?: string; art: ReactNode }[] = [
  {
    name: "Edge",
    cell: "bg-[#f6b27a]",
    bar: "w-[61px] bg-[#ea6a0c]",
    art: (
      <>
        <defs>
          <linearGradient id="edgeTop" x1="0" y1="0" x2="1" y2="0.400">
            <stop offset="0" stopColor="#2aa6e0" />
            <stop offset="1" stopColor="#5fd65a" />
          </linearGradient>
        </defs>
        <path d="M2 15C2 6 9 1 16 1c8 0 14 5 14 11 0 5-4 7-7 7-4 0-5-2-4-4 0-4-4-6-8-6-5 0-8 3-9 6z" fill="url(#edgeTop)" />
        <path d="M2 15c1-4 4-6 8-6 3 0 6 1 8 4-3-1-6 1-6 5 0 6 6 9 11 8 2 0 3-1 5-2-3 4-7 7-12 7C8 31 2 24 2 15z" fill="#1668c0" />
        <path d="M12 18c0 6 6 10 12 8l4-2c-3 4-7 6-10 6-5-1-8-6-6-12z" fill="#0f4f9e" />
      </>
    ),
  },
  {
    name: "Explorer",
    bar: "w-[51px] bg-[#1a76c0]",
    art: (
      <>
        <path d="M3 3h11l2 4H3z" fill="#d69a1c" />
        <path d="M3 6h26v22H3z" fill="#fbd367" />
        <path d="M6 29V19q0-3 3-3h14q3 0 3 3v10h-5v-7H11v7z" fill="#4a8fc4" />
      </>
    ),
  },
  {
    name: "Mail",
    art: (
      <>
        <path d="M1 12L16 2l15 10v5H1z" fill="#0d4f92" />
        <path d="M5 12h22L16 21z" fill="#eef4fa" />
        <path d="M1 12l30 18H1z" fill="#35a8ea" />
        <path d="M31 12v18L13 19z" fill="#2490dc" />
      </>
    ),
  },
  {
    name: "Store",
    art: (
      <>
        <path d="M9 7V2h14v5" stroke="#45b5e6" strokeWidth="2" fill="none" />
        <path d="M1 6h30v21q0 4-4 4H5q-4 0-4-4z" fill="#14406e" />
        <path d="M10.500 12h5v5h-5z" fill="#e8583a" />
        <path d="M16.500 12h5v5h-5z" fill="#7fbb3d" />
        <path d="M10.500 18h5v5h-5z" fill="#3fa9e4" />
        <path d="M16.500 18h5v5h-5z" fill="#f5c02e" />
      </>
    ),
  },
  {
    name: "G5",
    bar: "w-[51px] bg-[#1a76c0]",
    art: (
      <g stroke="#3428bc" strokeWidth="4.500" fill="none">
        <path d="M22 4C13 0 5 7 4 15c0 8 7 10 12 6" />
        <path d="M30 10h-11l-2 8c6-3 10 0 8 5-2 5-6 6-12 6" />
      </g>
    ),
  },
  {
    name: "Excel",
    bar: "w-[51px] bg-[#1a76c0]",
    art: (
      <>
        <path d="M9 2h22v28H9z" fill="#1f7a48" />
        <path d="M20 2h11v9H20z" fill="#3fbf7f" />
        <path d="M9 2h11v9H9z" fill="#2b9a60" />
        <path d="M20 20h11v10H20z" fill="#155c36" />
        <path d="M1 8h16v16H1z" fill="#12693a" />
        <path d="M6 12l6 8M12 12l-6 8" stroke="#fff" strokeWidth="2.500" />
      </>
    ),
  },
  {
    name: "WeChat",
    bar: "w-[51px] bg-[#1a76c0]",
    art: (
      <>
        <ellipse cx="12" cy="13" rx="11" ry="10" fill="#43cf6c" />
        <path d="M5 20l-1 5 6-3z" fill="#43cf6c" />
        <ellipse cx="22" cy="20" rx="9" ry="8" fill="#efeff0" />
        <path d="M25 26l4 3-1-5z" fill="#efeff0" />
        <circle cx="8" cy="10" r="1.500" fill="#23733c" />
        <circle cx="16" cy="10" r="1.500" fill="#23733c" />
        <circle cx="19" cy="18" r="1.300" fill="#777" />
        <circle cx="25" cy="18" r="1.300" fill="#777" />
      </>
    ),
  },
  {
    name: "ArcMap",
    cell: "bg-[#edf6e8]",
    bar: "w-[61px] bg-[#1a76c0]",
    art: (
      <>
        <circle cx="16" cy="16" r="15" fill="#1c5d72" stroke="#12394a" />
        <path d="M18 3l8 4 3 9-6 4-5-6z" fill="#4b9a6e" />
        <path d="M6 22l8 2 2 6-6-2z" fill="#3a8c8c" />
        <circle cx="13" cy="13" r="8" fill="#b8def0" stroke="#eef5f8" strokeWidth="1.500" />
        <path d="M19 19l10 10" stroke="#d8d8d8" strokeWidth="3" />
        <path d="M23 23l7 7" stroke="#b3683c" strokeWidth="4" />
      </>
    ),
  },
];

function Taskbar() {
  return (
    <footer className="flex h-[50px] shrink-0 bg-linear-to-r from-[#d7eacf] to-[#dcebc6]">
      <input
        aria-label="在这里输入你要搜索的内容"
        placeholder="在这里输入你要搜索的内容"
        className="w-[393px] border border-l-0 border-[#b9b9bb] bg-white pl-[14px] text-[19px] font-light outline-none placeholder:text-[#222]"
      />
      <button aria-label="Cortana" className="flex w-[61px] items-center justify-center">
        <span className="h-[19px] w-[19px] rounded-full border-[3px] border-black" />
      </button>
      <button aria-label="task view" className="flex w-[60px] items-center justify-center">
        <svg viewBox="0 0 22 22" className="h-[22px] w-[22px]" aria-hidden="true">
          <path d="M2 2v3h12V2M2 20v-3h12v3M2 7h12v8H2zM19 2v5M19 12v8" stroke="#111" strokeWidth="1.500" fill="none" />
          <path d="M17.500 8h3v3h-3z" fill="#111" />
        </svg>
      </button>
      <span className="w-1" />
      {APPS.map((a) => (
        <button
          key={a.name}
          aria-label={a.name}
          className={clsx("mr-px flex w-[61px] shrink-0 flex-col items-center justify-between", a.cell)}
        >
          <svg viewBox="0 0 32 32" className="mt-[9px] h-[31px] w-[31px]" aria-hidden="true">
            {a.art}
          </svg>
          {a.bar ? <span className={clsx("h-[3px]", a.bar)} /> : null}
        </button>
      ))}
      <div className="ml-auto flex w-[272px] shrink-0 items-center text-[18px]">
        <svg viewBox="0 0 28 22" className="h-[22px] w-7 shrink-0" aria-hidden="true">
          <path d="M7 20a6 6 0 0 1-1-12 8 8 0 0 1 15-1 7 7 0 0 1 1 13z" fill="#a4cdf0" />
          <path d="M7 20a6 6 0 0 1-1-11 6 6 0 0 1 10 2 5 5 0 0 1 2 9z" fill="#e8f4fc" />
        </svg>
        <span className="ml-[10px] w-[82px] whitespace-nowrap">13°C 阴</span>
        <svg viewBox="0 0 18 10" className="ml-2 h-[10px] w-[18px] shrink-0" aria-hidden="true">
          <path d="M1 9l8-8 8 8" stroke="#111" strokeWidth="1.500" fill="none" />
        </svg>
        <svg viewBox="0 0 20 14" className="ml-[10px] h-3.5 w-5 shrink-0" aria-hidden="true">
          <path d="M1 1h18v11H1zM4 9h12M4 5h12" stroke="#111" strokeWidth="1.500" fill="none" />
        </svg>
        <span className="ml-[10px] text-[17px] font-medium">中</span>
        <div className="ml-[14px] text-[15px] leading-6 whitespace-nowrap">
          <div className="pl-[17px]">20:15</div>
          <div>2022/3/</div>
        </div>
      </div>
    </footer>
  );
}

// ---------------------------------------------------------------------------
// App
// ---------------------------------------------------------------------------

export default function App() {
  return (
    <div className="relative flex h-screen flex-col overflow-hidden bg-linear-to-r from-[#efedf0] via-[#f5f4f7] to-[#fbfafc] font-['Open_Sans','Noto_Sans_CJK_SC',sans-serif] text-[#111]">
      <header className="flex h-[29px] shrink-0 items-center justify-between bg-white text-[16px]">
        <h1 className="-ml-[10px]">ArcMap</h1>
        <div className="flex items-center">
          <button aria-label="minimize" className="mr-[46px] h-px w-3 bg-black" />
          <button aria-label="maximize" className="h-[10px] w-px bg-black" />
        </div>
      </header>

      <nav className="-ml-[14px] flex h-[35px] shrink-0 items-center gap-[22px] pb-[2px] text-[15px]">
        {MENUS.map((m) => (
          <button key={m} className="whitespace-nowrap">
            {m}
          </button>
        ))}
      </nav>

      <Toolbars />

      <div className="flex min-h-0 flex-1 bg-[#f0eef1]">
        <ContentsPanel />
        <MapArea />
        <CreateFeatures />
      </div>

      <div className="flex h-[27px] shrink-0 items-center justify-between bg-[#f0eef1] pt-[2px] text-[15px] whitespace-nowrap">
        <span>m，方向: 61.6992, 周长: 4590.443 m</span>
        <span className="flex w-[256px] gap-[10px]">
          <span>5152638.045</span>
          <span>4105555.022 米</span>
        </span>
      </div>

      <Taskbar />

      {/* Recording timer */}
      <div className="absolute right-[77px] bottom-[23px] flex h-12 w-12 items-center justify-center rounded-full border-2 border-[#e4eefa] bg-linear-to-br from-[#3f86dc] to-[#5ea6f0] text-[15px] text-white">
        01:20
      </div>
    </div>
  );
}
